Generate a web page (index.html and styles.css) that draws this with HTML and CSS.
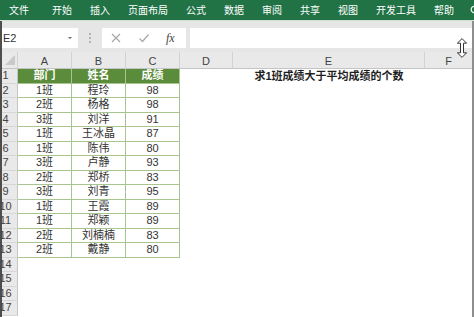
FILE: index.html
```html
<!DOCTYPE html>
<html>
<head>
<meta charset="utf-8">
<link rel="stylesheet" href="styles.css">
</head>
<body>
<div class="ribbon">
  <span class="tab first">文件</span>
  <span class="tab">开始</span>
  <span class="tab">插入</span>
  <span class="tab">页面布局</span>
  <span class="tab">公式</span>
  <span class="tab">数据</span>
  <span class="tab">审阅</span>
  <span class="tab">共享</span>
  <span class="tab">视图</span>
  <span class="tab">开发工具</span>
  <span class="tab">帮助</span>
  <svg class="search" width="10" height="10" viewBox="0 0 10 10"><circle cx="4.5" cy="4.5" r="3.3" stroke="#fff" stroke-width="1.2" fill="none"/></svg>
</div>
<div class="work">
  <div class="fbar">
    <div class="namebox"><span class="nb-text">E2</span><span class="nb-arrow"></span></div>
    <div class="dots"><i></i><i></i><i></i></div>
    <div class="fxbox">
      <svg class="ico" width="12" height="12" viewBox="0 0 12 12"><path d="M2 2 L10 10 M10 2 L2 10" stroke="#a8a8a8" stroke-width="1.2" fill="none"/></svg>
      <svg class="ico" width="12" height="12" viewBox="0 0 12 12"><path d="M1.5 6.5 L4.5 9.5 L10.5 2.5" stroke="#a8a8a8" stroke-width="1.2" fill="none"/></svg>
      <span class="fx">fx</span>
    </div>
    <div class="finput"></div>
    <svg class="cursor" width="12" height="20" viewBox="0 0 12 20"><path d="M6 0.6 L10.6 5.2 L7.5 5.2 L7.5 14.8 L10.6 14.8 L6 19.4 L1.4 14.8 L4.5 14.8 L4.5 5.2 L1.4 5.2 Z" fill="#fff" stroke="#333" stroke-width="1"/></svg>
  </div>
  <div class="grid">
    <div class="ch corner"><svg width="12" height="12" viewBox="0 0 12 12"><polygon points="11,1 11,11 1,11" fill="#c9c9c9"/></svg></div>
    <div class="ch">A</div><div class="ch">B</div><div class="ch">C</div><div class="ch">D</div><div class="ch">E</div><div class="ch last">F</div>

    <div class="rh"><span>1</span></div><div class="c t h">部门</div><div class="c t h">姓名</div><div class="c t h">成绩</div><div class="c"></div><div class="c title">求1班成绩大于平均成绩的个数</div><div class="c"></div>
    <div class="rh"><span>2</span></div><div class="c t">1班</div><div class="c t">程玲</div><div class="c t">98</div><div class="c"></div><div class="c"></div><div class="c"></div>
    <div class="rh"><span>3</span></div><div class="c t">2班</div><div class="c t">杨格</div><div class="c t">98</div><div class="c"></div><div class="c"></div><div class="c"></div>
    <div class="rh"><span>4</span></div><div class="c t">3班</div><div class="c t">刘洋</div><div class="c t">91</div><div class="c"></div><div class="c"></div><div class="c"></div>
    <div class="rh"><span>5</span></div><div class="c t">1班</div><div class="c t">王冰晶</div><div class="c t">87</div><div class="c"></div><div class="c"></div><div class="c"></div>
    <div class="rh"><span>6</span></div><div class="c t">1班</div><div class="c t">陈伟</div><div class="c t">80</div><div class="c"></div><div class="c"></div><div class="c"></div>
    <div class="rh"><span>7</span></div><div class="c t">3班</div><div class="c t">卢静</div><div class="c t">93</div><div class="c"></div><div class="c"></div><div class="c"></div>
    <div class="rh"><span>8</span></div><div class="c t">2班</div><div class="c t">郑桥</div><div class="c t">83</div><div class="c"></div><div class="c"></div><div class="c"></div>
    <div class="rh"><span>9</span></div><div class="c t">3班</div><div class="c t">刘青</div><div class="c t">95</div><div class="c"></div><div class="c"></div><div class="c"></div>
    <div class="rh"><span>10</span></div><div class="c t">1班</div><div class="c t">王霞</div><div class="c t">89</div><div class="c"></div><div class="c"></div><div class="c"></div>
    <div class="rh"><span>11</span></div><div class="c t">1班</div><div class="c t">郑颖</div><div class="c t">89</div><div class="c"></div><div class="c"></div><div class="c"></div>
    <div class="rh"><span>12</span></div><div class="c t">2班</div><div class="c t">刘楠楠</div><div class="c t">83</div><div class="c"></div><div class="c"></div><div class="c"></div>
    <div class="rh"><span>13</span></div><div class="c t">2班</div><div class="c t">戴静</div><div class="c t">80</div><div class="c"></div><div class="c"></div><div class="c"></div>
    <div class="rh"><span>14</span></div><div class="c"></div><div class="c"></div><div class="c"></div><div class="c"></div><div class="c"></div><div class="c"></div>
    <div class="rh"><span>15</span></div><div class="c"></div><div class="c"></div><div class="c"></div><div class="c"></div><div class="c"></div><div class="c"></div>
    <div class="rh"><span>16</span></div><div class="c"></div><div class="c"></div><div class="c"></div><div class="c"></div><div class="c"></div><div class="c"></div>
    <div class="rh"><span>17</span></div><div class="c"></div><div class="c"></div><div class="c"></div><div class="c"></div><div class="c"></div><div class="c"></div>
  </div>
</div>
</body>
</html>
```
FILE: styles.css
```css
html, body {
  margin: 0;
  padding: 0;
  width: 474px;
  height: 317px;
  overflow: hidden;
  background: #fff;
  font-family: "Liberation Sans", "Noto Sans CJK SC", sans-serif;
}

.ribbon {
  height: 20px;
  background: #217346;
  border-bottom: 1px solid #cfe0d5;
  display: flex;
  align-items: center;
  gap: 18px;
  padding-left: 9px;
  color: #fff;
  font-family: "Noto Sans CJK SC", sans-serif;
  font-size: 10px;
  line-height: 1;
  white-space: nowrap;
  overflow: hidden;
}

.tab.first {
  margin-right: 5px;
}

.search {
  flex: none;
  margin-left: -2px;
}

.work {
  position: relative;
  border-left: 2px solid #4e4e4e;
  border-right: 2px solid #8e8e8e;
  height: 296px;
}

.fbar {
  position: relative;
  height: 31px;
  box-sizing: border-box;
  padding-top: 7px;
  background: #e6e6e6;
  display: flex;
  align-items: flex-start;
}

.namebox {
  width: 76px;
  height: 20px;
  background: #fff;
  display: flex;
  align-items: center;
  justify-content: space-between;
  padding: 0 6px 0 1px;
  box-sizing: border-box;
}

.nb-text {
  font-size: 11px;
  color: #333;
}

.nb-arrow {
  width: 0;
  height: 0;
  border-left: 2px solid transparent;
  border-right: 2px solid transparent;
  border-top: 2px solid #666;
}

.dots {
  width: 24px;
  height: 20px;
  display: flex;
  flex-direction: column;
  align-items: center;
  justify-content: center;
  gap: 2.5px;
}

.dots i {
  display: block;
  width: 1.5px;
  height: 1.5px;
  background: #b4b4b4;
}

.fxbox {
  width: 84px;
  height: 20px;
  background: #fff;
  display: flex;
  align-items: center;
  padding-left: 8px;
  box-sizing: border-box;
  gap: 16px;
}

.fx {
  font-family: "Liberation Serif", serif;
  font-style: italic;
  font-size: 12px;
  color: #444;
}

.finput {
  flex: 1;
  height: 20px;
  background: #fff;
  margin-left: 4px;
}

.cursor {
  position: absolute;
  left: 454px;
  top: 17px;
}

.grid {
  display: grid;
  grid-template-columns: 16px 54px 54px 54px 53px 192px 1fr;
  grid-template-rows: 17px repeat(17, 14.5px);
  font-size: 11px;
  line-height: 1;
}

.ch {
  background: #e9e9e9;
  border-right: 1px solid #d2d2d2;
  border-bottom: 1px solid #c4c4c4;
  box-sizing: border-box;
  display: flex;
  align-items: center;
  justify-content: center;
  padding-top: 2px;
  color: #444;
}

.ch.last {
  border-right: none;
}

.corner {
  justify-content: flex-end;
  align-items: flex-end;
  padding: 0 1px 2px 0;
}

.rh {
  background: #e9e9e9;
  border-right: 1px solid #c4c4c4;
  border-bottom: 1px solid #d6d6d6;
  box-sizing: border-box;
  display: flex;
  align-items: center;
  justify-content: center;
  padding-right: 8px;
  color: #444;
  white-space: nowrap;
}

.c {
  box-sizing: border-box;
  display: flex;
  align-items: center;
  justify-content: center;
  color: #333;
  white-space: nowrap;
}

.t {
  border-right: 1px solid #a9c58f;
  border-bottom: 1px solid #a9c58f;
}

.h {
  background: #5b8c3b;
  color: #fff;
  font-weight: bold;
}

.title {
  font-weight: bold;
  color: #1e1e1e;
}
```
